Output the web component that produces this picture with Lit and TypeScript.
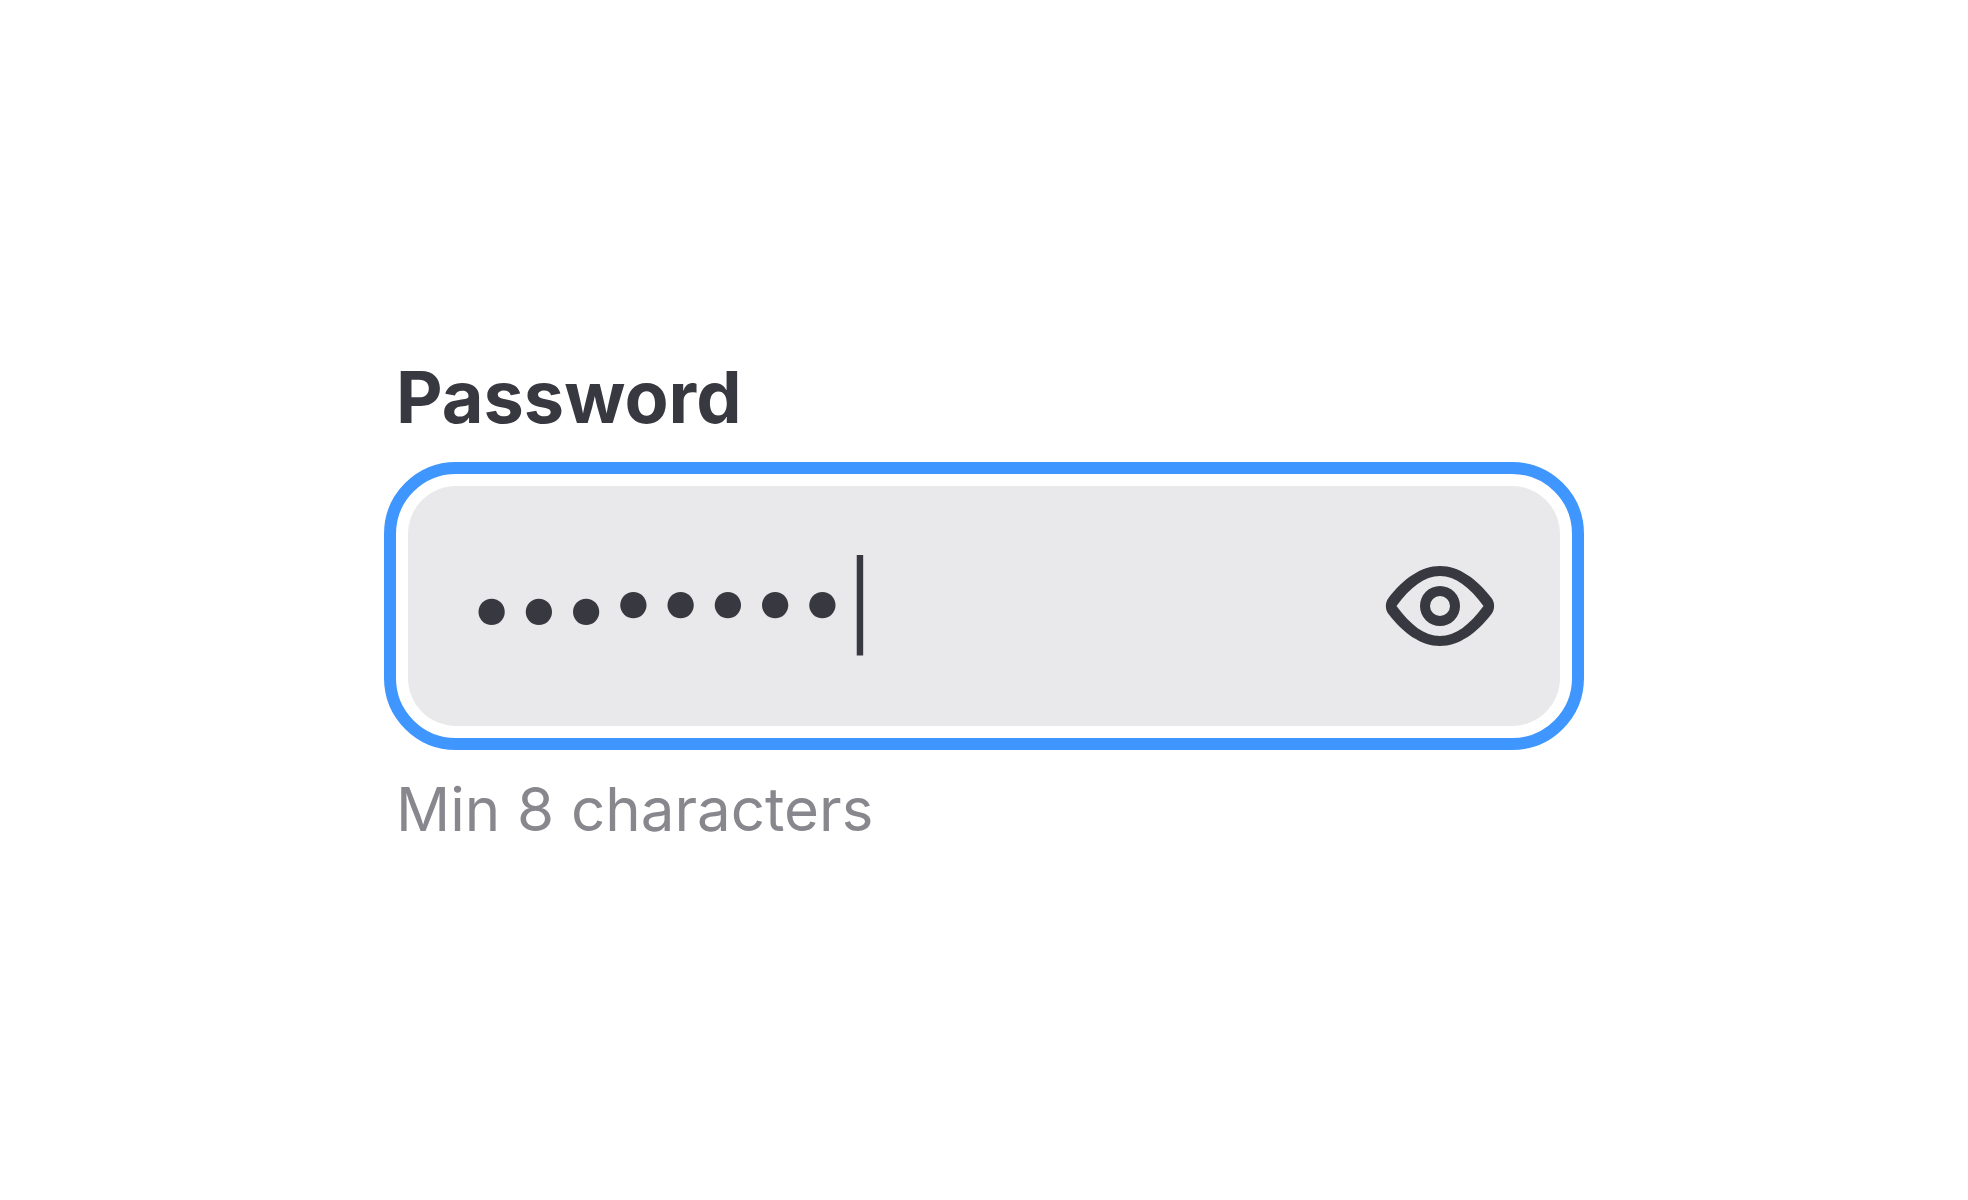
import { LitElement, html, css } from "lit";
import { customElement, property, state } from "lit/decorators.js";

@customElement("password-field")
class PasswordField extends LitElement {
  @property() label = "";
  @property() hint = "";
  @property() value = "";
  @state() private revealed = false;

  static styles = css`
    :host {
      display: block;
      width: 100%;
    }
    .field {
      display: flex;
      flex-direction: column;
    }
    .label {
      padding: 0 12px;
      font-size: 72px;
      line-height: 86px;
      font-weight: 700;
      color: #383840;
    }
    .ring {
      margin: 22px 0;
      padding: 12px;
      border: 12px solid #4096ff;
      border-radius: 72px;
    }
    .control {
      display: flex;
      align-items: center;
      padding: 60px;
      border-radius: 48px;
      background: #e9e9eb;
    }
    .entry {
      flex: 1;
      display: grid;
      align-items: center;
      min-width: 0;
      font-size: 84px;
      line-height: 100px;
      color: #383840;
    }
    .input,
    .display {
      grid-area: 1 / 1;
      min-width: 0;
    }
    .input {
      margin: 0;
      padding: 0;
      border: 0;
      outline: 0;
      background: none;
      font: inherit;
      color: transparent;
      caret-color: transparent;
    }
    .display {
      pointer-events: none;
      white-space: pre;
    }
    .toggle {
      flex: none;
      display: block;
      padding: 0;
      border: 0;
      background: none;
      color: #383840;
      cursor: pointer;
    }
    .icon {
      display: block;
      width: 120px;
      height: 120px;
    }
    .hint {
      padding: 0 12px;
      font-size: 60px;
      line-height: 74px;
      color: #88878d;
    }
  `;

  private onInput(event: Event) {
    this.value = (event.target as HTMLInputElement).value;
  }

  render() {
    const shown = this.revealed ? this.value : "•".repeat(this.value.length);
    return html`
      <div class="field">
        <label class="label" for="password">${this.label}</label>
        <div class="ring">
          <div class="control">
            <div class="entry">
              <input
                class="input"
                id="password"
                type="password"
                .value=${this.value}
                aria-describedby="hint"
                @input=${this.onInput}
              />
              <span class="display" aria-hidden="true">${shown + "|"}</span>
            </div>
            <button
              class="toggle"
              type="button"
              aria-label="Show password"
              aria-pressed=${this.revealed}
              @click=${() => (this.revealed = !this.revealed)}
            >
              <svg class="icon" viewBox="0 0 24 24" fill="currentColor" fill-rule="evenodd">
                <path
                  d="M12 4C8.2 4 4.6 6.6 1.7 10.4C1 11.3 1 12.7 1.7 13.6C4.6 17.4 8.2 20 12 20S19.4 17.4 22.3 13.6C23 12.7 23 11.3 22.3 10.4C19.4 6.6 15.8 4 12 4ZM12 6C15.1 6 17.9 8.2 20.7 12C17.9 15.8 15.1 18 12 18S6.1 15.8 3.3 12C6.1 8.2 8.9 6 12 6Z"
                />
                <path d="M12 8a4 4 0 1 0 0 8a4 4 0 1 0 0-8ZM12 10a2 2 0 1 1 0 4a2 2 0 1 1 0-4Z" />
              </svg>
            </button>
          </div>
        </div>
        <div class="hint" id="hint">${this.hint}</div>
      </div>
    `;
  }
}

@customElement("app-root")
class AppRoot extends LitElement {
  static styles = css`
    :host {
      display: flex;
      align-items: center;
      justify-content: center;
      min-height: 100vh;
      background: #ffffff;
      font-family: Inter, sans-serif;
    }
    .stage {
      width: 100%;
      max-width: 1200px;
    }
  `;

  render() {
    return html`
      <main class="stage">
        <password-field label="Password" hint="Min 8 characters" value="password"></password-field>
      </main>
    `;
  }
}
